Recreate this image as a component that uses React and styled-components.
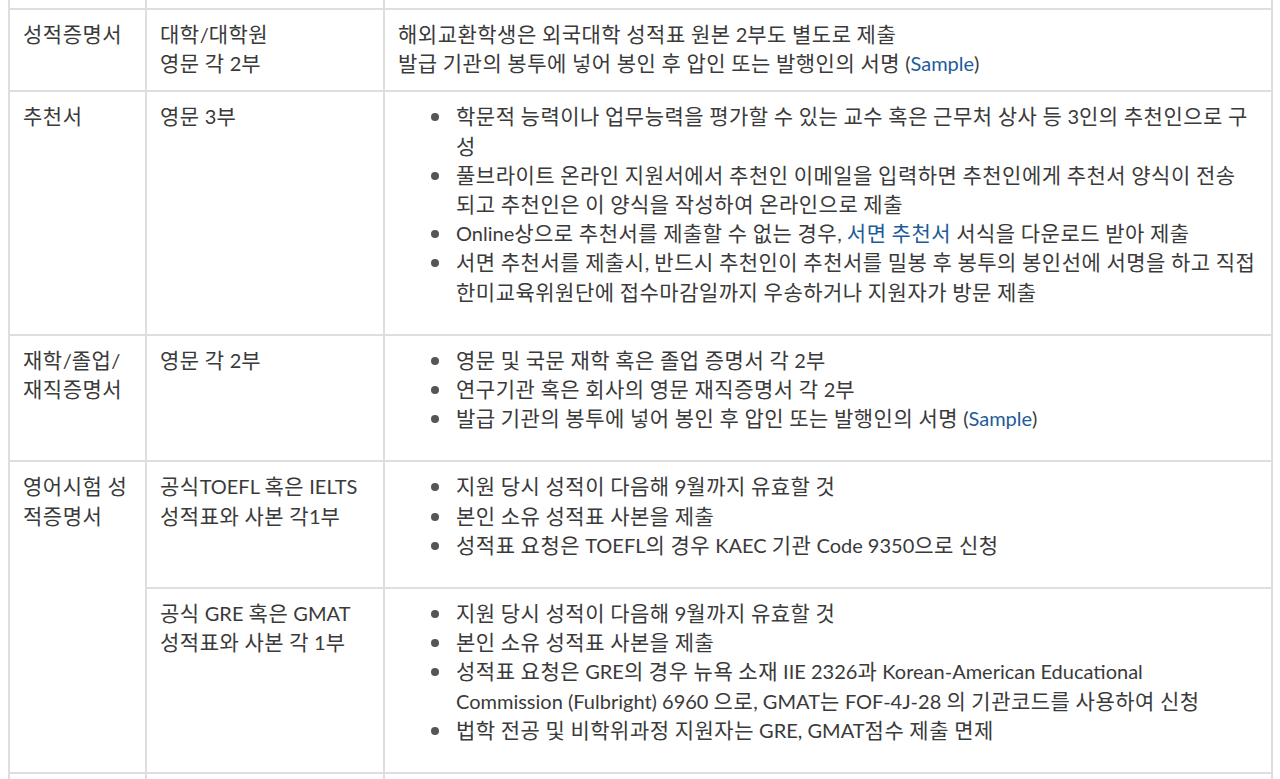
import React from "react";
import styled, { createGlobalStyle } from "styled-components";

const GlobalStyle = createGlobalStyle`
  html, body {
    margin: 0;
    padding: 0;
    background: #fff;
  }
  body {
    font-family: Lato, "Noto Sans CJK KR", sans-serif;
    color: #3a3a3a;
    overflow: hidden;
  }
`;

const Page = styled.div`
  padding: 0 7px 0 8px;
`;

const Table = styled.table`
  width: 100%;
  border-collapse: collapse;
  table-layout: fixed;
  font-size: 20px;
  line-height: 29.2px;
`;

const Cell = styled.td`
  border: 2px solid #dedede;
  padding: 10px 12px 12px 13px;
  vertical-align: top;
  ${(p) => p.$filler && `height: ${p.$filler}px; padding: 0;`}
  ${(p) => p.$noTop && `border-top: none;`}
  ${(p) => p.$noBottom && `border-bottom: none;`}
`;

/* Hangul runs: the reference's Korean face is a bit wider than Noto's */
const Ko = styled.span`
  font-family: "Noto Sans CJK KR", sans-serif;
  font-size: 21px;
  letter-spacing: 0.5px;
  line-height: 1;
`;

const List = styled.ul`
  margin: 0 0 15px;
  padding-left: 58px;
  list-style: none;
`;

const Item = styled.li`
  position: relative;

  &::before {
    content: "";
    position: absolute;
    left: -25px;
    top: 11px;
    width: 8px;
    height: 8px;
    border-radius: 50%;
    background: #555;
  }
`;

const Link = styled.a`
  color: #1d5c97;
  text-decoration: none;
`;

const HANGUL = /([\u1100-\u11ff\u3130-\u318f\uac00-\ud7af]+)/;

// "\n" marks where the reference wraps a line
const ko = (str) =>
  str.split("\n").map((line, j) => (
    <React.Fragment key={j}>
      {j > 0 && <br />}
      {line.split(HANGUL).map((part, i) => (i % 2 ? <Ko key={i}>{part}</Ko> : part))}
    </React.Fragment>
  ));

// a piece of text is a string or a list of strings and { link } objects
const Rich = ({ text }) =>
  (Array.isArray(text) ? text : [text]).map((part, i) =>
    typeof part === "string" ? (
      <React.Fragment key={i}>{ko(part)}</React.Fragment>
    ) : (
      <Link key={i} href="#">
        {ko(part.link)}
      </Link>
    )
  );

const rows = [
  {
    title: "성적증명서",
    sub: "대학/대학원\n영문 각 2부",
    lines: [
      "해외교환학생은 외국대학 성적표 원본 2부도 별도로 제출\n발급 기관의 봉투에 넣어 봉인 후 압인 또는 발행인의 서명 (",
      { link: "Sample" },
      ")",
    ],
  },
  {
    title: "추천서",
    sub: "영문 3부",
    items: [
      "학문적 능력이나 업무능력을 평가할 수 있는 교수 혹은 근무처 상사 등 3인의 추천인으로 구\n성",
      "풀브라이트 온라인 지원서에서 추천인 이메일을 입력하면 추천인에게 추천서 양식이 전송\n되고 추천인은 이 양식을 작성하여 온라인으로 제출",
      ["Online상으로 추천서를 제출할 수 없는 경우, ", { link: "서면 추천서" }, " 서식을 다운로드 받아 제출"],
      "서면 추천서를 제출시, 반드시 추천인이 추천서를 밀봉 후 봉투의 봉인선에 서명을 하고 직접\n한미교육위원단에 접수마감일까지 우송하거나 지원자가 방문 제출",
    ],
  },
  {
    title: "재학/졸업/\n재직증명서",
    sub: "영문 각 2부",
    items: [
      "영문 및 국문 재학 혹은 졸업 증명서 각 2부",
      "연구기관 혹은 회사의 영문 재직증명서 각 2부",
      ["발급 기관의 봉투에 넣어 봉인 후 압인 또는 발행인의 서명 (", { link: "Sample" }, ")"],
    ],
  },
];

const englishTests = [
  {
    sub: "공식TOEFL 혹은 IELTS\n성적표와 사본 각1부",
    items: [
      "지원 당시 성적이 다음해 9월까지 유효할 것",
      "본인 소유 성적표 사본을 제출",
      "성적표 요청은 TOEFL의 경우 KAEC 기관 Code 9350으로 신청",
    ],
  },
  {
    sub: "공식 GRE 혹은 GMAT\n성적표와 사본 각 1부",
    items: [
      "지원 당시 성적이 다음해 9월까지 유효할 것",
      "본인 소유 성적표 사본을 제출",
      "성적표 요청은 GRE의 경우 뉴욕 소재 IIE 2326과 Korean-American Educational\nCommission (Fulbright) 6960 으로, GMAT는 FOF-4J-28 의 기관코드를 사용하여 신청",
      "법학 전공 및 비학위과정 지원자는 GRE, GMAT점수 제출 면제",
    ],
  },
];

const Detail = ({ row }) =>
  row.items ? (
    <List>
      {row.items.map((it, i) => (
        <Item key={i}>
          <Rich text={it} />
        </Item>
      ))}
    </List>
  ) : (
    <Rich text={row.lines} />
  );

export default function App() {
  return (
    <>
      <GlobalStyle />
      <Page>
        <Table>
          <colgroup>
            <col style={{ width: 137 }} />
            <col style={{ width: 238 }} />
            <col />
          </colgroup>
          <tbody>
            <tr>
              <Cell $filler={8} $noTop />
              <Cell $filler={8} $noTop />
              <Cell $filler={8} $noTop />
            </tr>
            {rows.map((row, i) => (
              <tr key={i}>
                <Cell>
                  <Rich text={row.title} />
                </Cell>
                <Cell>
                  <Rich text={row.sub} />
                </Cell>
                <Cell>
                  <Detail row={row} />
                </Cell>
              </tr>
            ))}
            {englishTests.map((row, i) => (
              <tr key={i}>
                {i === 0 && (
                  <Cell rowSpan={englishTests.length}>
                    <Rich text="영어시험 성적증명서" />
                  </Cell>
                )}
                <Cell>
                  <Rich text={row.sub} />
                </Cell>
                <Cell>
                  <Detail row={row} />
                </Cell>
              </tr>
            ))}
            <tr>
              <Cell $filler={20} $noBottom />
              <Cell $filler={20} $noBottom />
              <Cell $filler={20} $noBottom />
            </tr>
          </tbody>
        </Table>
      </Page>
    </>
  );
}
